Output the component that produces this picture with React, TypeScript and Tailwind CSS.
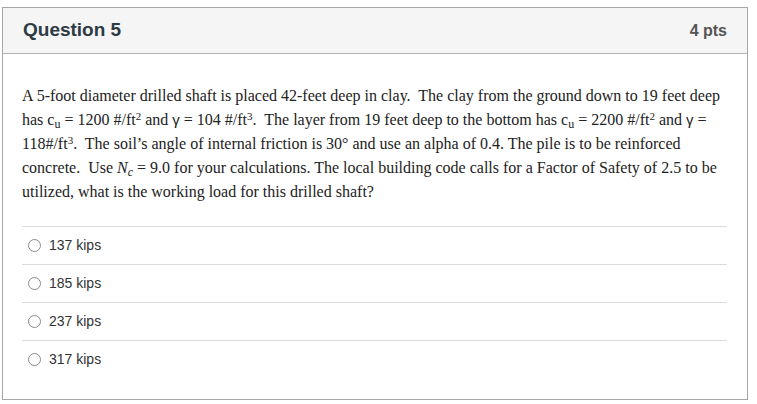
import React from 'react';

const answers = ['137 kips', '185 kips', '237 kips', '317 kips'];

function Gamma() {
  return <span className="font-['Liberation_Sans',sans-serif] text-[15px]">γ</span>;
}

function Sub({ children }: { children: React.ReactNode }) {
  return <sub className="text-[12px] leading-none">{children}</sub>;
}

function Sup({ children }: { children: React.ReactNode }) {
  return <sup className="text-[11px] leading-none">{children}</sup>;
}

export default function App() {
  return (
    <div className="min-h-[404px] w-[757px] bg-white pl-[2px] pt-[7px]">
      <div className="flex h-[393px] w-[746px] flex-col border border-[#a6a6a6] bg-white">
        <div className="flex h-[46px] shrink-0 items-center justify-between border-b border-[#b4b4b4] bg-[#f5f5f5] pl-[20px] pr-[20px] font-['Liberation_Sans',Arial,sans-serif]">
          <h2 className="text-[19px] font-bold text-[#2d3b45]">Question 5</h2>
          <span className="text-[16px] font-bold text-[#555]">4 pts</span>
        </div>

        <div className="px-[19px] pr-[20px] pt-[30px]">
          <p className="font-['Liberation_Serif','Times_New_Roman',serif] text-[16px] leading-[24px] text-[#222]">
            A 5-foot diameter drilled shaft is placed 42-feet deep in clay.&nbsp; The clay from the ground down to 19 feet deep
            has c<Sub>u</Sub> = 1200 #/ft<Sup>2</Sup> and <Gamma /> = 104 #/ft<Sup>3</Sup>.&nbsp; The layer from 19 feet deep to the
            bottom has c<Sub>u</Sub> = 2200 #/ft<Sup>2</Sup> and <Gamma /> = 118#/ft<Sup>3</Sup>.&nbsp; The soil&rsquo;s angle of
            internal friction is 30&deg; and use an alpha of 0.4. The pile is to be reinforced concrete.&nbsp; Use{' '}
            <i>N</i>
            <Sub>
              <i>c</i>
            </Sub>{' '}
            = 9.0 for your calculations. The local building code calls for a Factor of Safety of 2.5 to be utilized, what is
            the working load for this drilled shaft?
          </p>

          <div className="mt-[22px]">
            {answers.map((a) => (
              <div key={a} className="flex h-[38px] items-center border-t border-[#dcdcdc]">
                <span className="ml-[6px] h-[13px] w-[13px] rounded-full border border-[#8a8a8a] bg-white" />
                <span className="ml-[8px] font-['Liberation_Sans',Arial,sans-serif] text-[14px] text-[#333]">{a}</span>
              </div>
            ))}
          </div>
        </div>
      </div>
    </div>
  );
}
